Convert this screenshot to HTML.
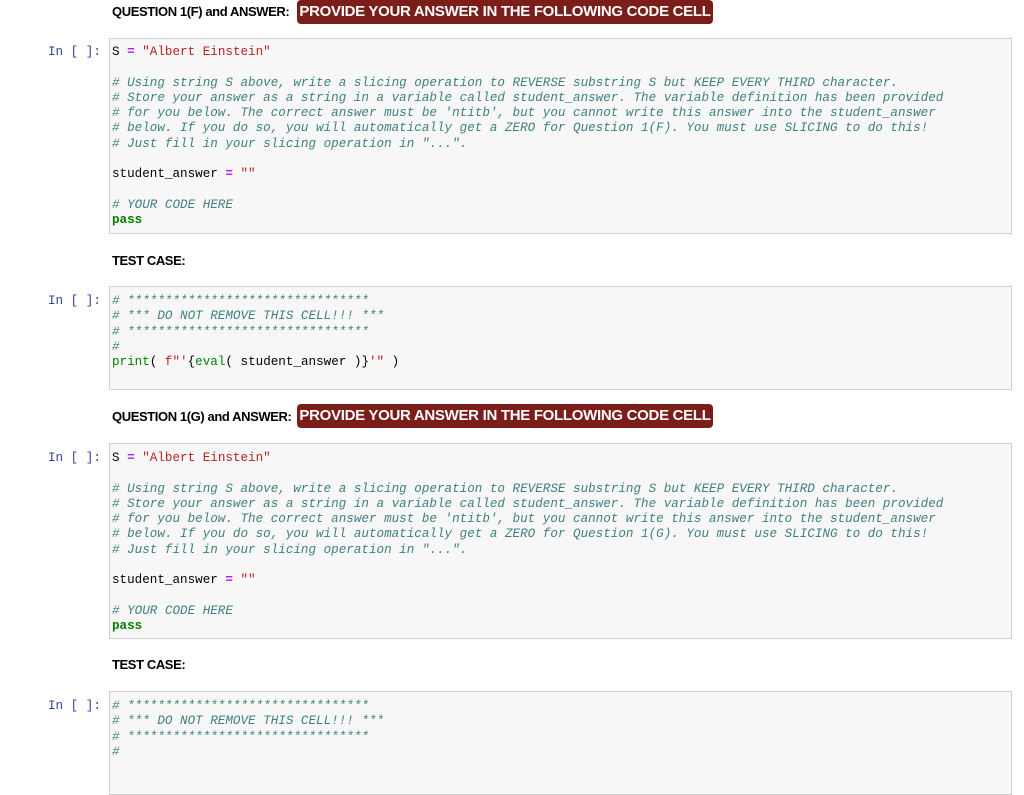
<!DOCTYPE html>
<html><head><meta charset="utf-8"><style>
body{margin:0;width:1024px;height:751px;background:#fff;position:relative;overflow:hidden;font-family:"Liberation Sans",sans-serif}
.h{position:absolute;left:112px;font-weight:bold;font-size:13px;color:#000;letter-spacing:-0.4px}
.box{position:absolute;left:297px;width:416px;height:24px;background:#7b1e1a;border-radius:4px;color:#fff;font-weight:bold;font-size:15px;line-height:24px;text-align:center;letter-spacing:-0.3px}
.cell{position:absolute;left:109px;width:903px;background:#f7f7f7;border:1px solid #cfcfcf;box-sizing:border-box}
.code{position:absolute;left:112px;font-family:"Liberation Mono",monospace;font-size:12.6px;line-height:15.3px;white-space:pre;color:#000}
.p{position:absolute;left:48px;font-family:"Liberation Mono",monospace;font-size:12.6px;color:#303f9f}
.c{color:#408080;font-style:italic}
.s{color:#ba2121}
.o{color:#aa22ff;font-weight:bold}
.k{color:#008000;font-weight:bold}
.b{color:#008000}
</style></head><body>
<div class="h" style="top:4px">QUESTION 1(F) and ANSWER:</div>
<div class="box" style="top:0px">PROVIDE YOUR ANSWER IN THE FOLLOWING CODE CELL</div>
<div class="cell" style="top:38px;height:196px"></div>
<div class="p" style="top:45px">In [ ]:</div>
<div class="code" style="top:45px">S <span class="o">=</span> <span class="s">"Albert Einstein"</span>

<span class="c"># Using string S above, write a slicing operation to REVERSE substring S but KEEP EVERY THIRD character.
# Store your answer as a string in a variable called student_answer. The variable definition has been provided
# for you below. The correct answer must be 'ntitb', but you cannot write this answer into the student_answer
# below. If you do so, you will automatically get a ZERO for Question 1(F). You must use SLICING to do this!
# Just fill in your slicing operation in "...".</span>

student_answer <span class="o">=</span> <span class="s">""</span>

<span class="c"># YOUR CODE HERE</span>
<span class="k">pass</span></div>
<div class="h" style="top:253px">TEST CASE:</div>
<div class="cell" style="top:286px;height:104px"></div>
<div class="p" style="top:294px">In [ ]:</div>
<div class="code" style="top:294px"><span class="c"># ********************************
# *** DO NOT REMOVE THIS CELL!!! ***
# ********************************
#</span>
<span class="b">print</span>( <span class="s">f"'</span>{<span class="b">eval</span>( student_answer )}<span class="s">'"</span> )</div>

<div class="h" style="top:409px">QUESTION 1(G) and ANSWER:</div>
<div class="box" style="top:404px">PROVIDE YOUR ANSWER IN THE FOLLOWING CODE CELL</div>
<div class="cell" style="top:443px;height:196px"></div>
<div class="p" style="top:451px">In [ ]:</div>
<div class="code" style="top:451px">S <span class="o">=</span> <span class="s">"Albert Einstein"</span>

<span class="c"># Using string S above, write a slicing operation to REVERSE substring S but KEEP EVERY THIRD character.
# Store your answer as a string in a variable called student_answer. The variable definition has been provided
# for you below. The correct answer must be 'ntitb', but you cannot write this answer into the student_answer
# below. If you do so, you will automatically get a ZERO for Question 1(G). You must use SLICING to do this!
# Just fill in your slicing operation in "...".</span>

student_answer <span class="o">=</span> <span class="s">""</span>

<span class="c"># YOUR CODE HERE</span>
<span class="k">pass</span></div>
<div class="h" style="top:657px">TEST CASE:</div>
<div class="cell" style="top:691px;height:104px"></div>
<div class="p" style="top:699px">In [ ]:</div>
<div class="code" style="top:699px"><span class="c"># ********************************
# *** DO NOT REMOVE THIS CELL!!! ***
# ********************************
#</span></div>
</body></html>
